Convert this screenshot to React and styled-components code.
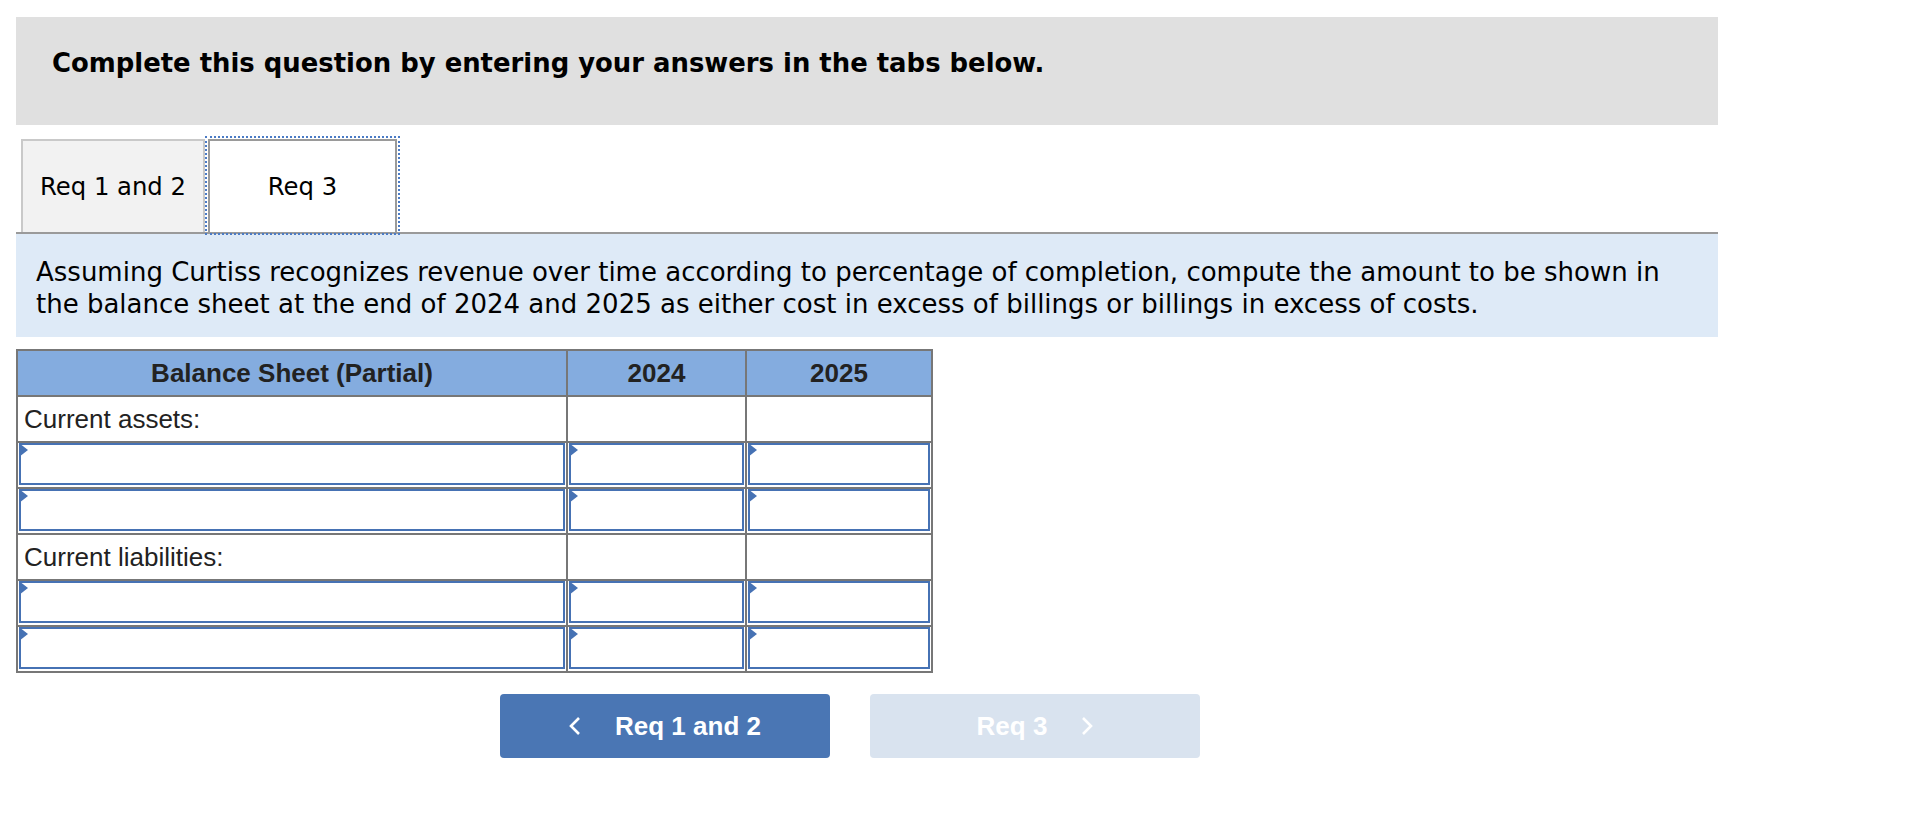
import React from 'react';
import styled, { createGlobalStyle } from 'styled-components';

const GlobalStyle = createGlobalStyle`
  body {
    margin: 0;
    background: #fff;
    font-family: "DejaVu Sans", Verdana, sans-serif;
  }
`;

const Page = styled.div`
  padding: 17px 0 0 16px;
  width: 1702px;
`;

const Banner = styled.div`
  height: 108px;
  box-sizing: border-box;
  padding: 31px 0 0 36px;
  background: #e0e0e0;
  color: #000;
  font-size: 25.9px;
  font-weight: bold;
`;

const TabBar = styled.div`
  display: flex;
  align-items: flex-end;
  margin-top: 14px;
  padding-left: 5px;
`;

const Tab = styled.div`
  display: flex;
  align-items: center;
  justify-content: center;
  width: ${p => p.$w}px;
  height: 93px;
  box-sizing: border-box;
  margin-left: ${p => (p.$active ? '3px' : '0')};
  border: 2px solid ${p => (p.$active ? '#9a9a9a' : '#c9c9c9')};
  border-bottom: none;
  background: ${p => (p.$active ? '#fff' : '#f2f2f2')};
  outline: ${p => (p.$active ? '2px dotted #4b7bc5' : 'none')};
  outline-offset: 1px;
  color: #000;
  font-size: 24.3px;
`;

const Prompt = styled.div`
  height: 105px;
  box-sizing: border-box;
  padding: 23px 20px 0;
  border-top: 2px solid #9a9a9a;
  background: #deeaf7;
  color: #000;
  font-size: 26px;
  line-height: 31.7px;
`;

const Sheet = styled.table`
  margin-top: 12px;
  width: 915px;
  table-layout: fixed;
  border-collapse: collapse;
  font-family: "Liberation Sans", Arial, sans-serif;
  font-size: 26px;
  color: #222;
`;

const Head = styled.th`
  height: 44px;
  padding: 0;
  border: 2px solid #777;
  background: #84acdf;
  font-weight: bold;
  text-align: center;
`;

const Cell = styled.td`
  height: 44px;
  padding: ${p => (p.$input ? '0 1px' : '0 6px')};
  border: 2px solid #777;
  background: #fff;
  vertical-align: ${p => (p.$input ? 'top' : 'middle')};
`;

const Entry = styled.div`
  position: relative;
  height: 42px;
  box-sizing: border-box;
  border: 2px solid #4672b4;
  background: #fff;

  &::before {
    content: '';
    position: absolute;
    left: -2px;
    top: -2px;
    border-left: 9px solid #4672b4;
    border-top: 7px solid transparent;
    border-bottom: 7px solid transparent;
  }
`;

const Nav = styled.div`
  display: flex;
  gap: 40px;
  margin: 21px 0 0 484px;
`;

const NavButton = styled.div`
  display: flex;
  align-items: center;
  justify-content: center;
  gap: 34px;
  width: 330px;
  height: 64px;
  border-radius: 4px;
  background: ${p => (p.$disabled ? '#d9e3ef' : '#4a76b4')};
  color: #fff;
  font-family: "Liberation Sans", Arial, sans-serif;
  font-size: 26px;
  font-weight: bold;
`;

const Chevron = ({ dir }) => (
  <svg width="12" height="20" viewBox="0 0 12 20">
    <polyline
      points={dir === 'left' ? '10,2 2,10 10,18' : '2,2 10,10 2,18'}
      fill="none"
      stroke="#fff"
      strokeWidth="2.6"
    />
  </svg>
);

const rows = [
  { label: 'Current assets:' },
  { input: true },
  { input: true },
  { label: 'Current liabilities:' },
  { input: true },
  { input: true },
];

export default function App() {
  return (
    <Page>
      <GlobalStyle />
      <Banner>Complete this question by entering your answers in the tabs below.</Banner>

      <TabBar>
        <Tab $w={184}>Req 1 and 2</Tab>
        <Tab $w={189} $active>Req 3</Tab>
      </TabBar>

      <Prompt>
        Assuming Curtiss recognizes revenue over time according to percentage of completion, compute the amount to be shown in
        <br />
        the balance sheet at the end of 2024 and 2025 as either cost in excess of billings or billings in excess of costs.
      </Prompt>

      <Sheet>
        <colgroup>
          <col style={{ width: 550 }} />
          <col style={{ width: 179 }} />
          <col style={{ width: 186 }} />
        </colgroup>
        <thead>
          <tr>
            <Head>Balance Sheet (Partial)</Head>
            <Head>2024</Head>
            <Head>2025</Head>
          </tr>
        </thead>
        <tbody>
          {rows.map((r, i) =>
            r.input ? (
              <tr key={i}>
                <Cell $input><Entry /></Cell>
                <Cell $input><Entry /></Cell>
                <Cell $input><Entry /></Cell>
              </tr>
            ) : (
              <tr key={i}>
                <Cell>{r.label}</Cell>
                <Cell />
                <Cell />
              </tr>
            )
          )}
        </tbody>
      </Sheet>

      <Nav>
        <NavButton>
          <Chevron dir="left" />
          <span>Req 1 and 2</span>
        </NavButton>
        <NavButton $disabled>
          <span>Req 3</span>
          <Chevron dir="right" />
        </NavButton>
      </Nav>
    </Page>
  );
}
